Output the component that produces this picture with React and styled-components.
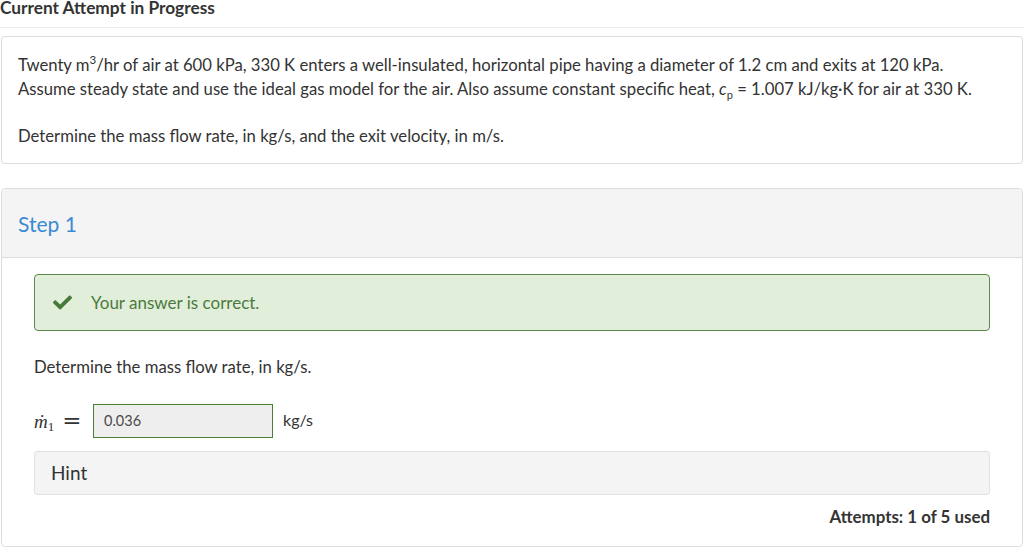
import styled, { createGlobalStyle } from "styled-components";
import { FaCheck } from "react-icons/fa";

const GlobalStyle = createGlobalStyle`
  body {
    margin: 0;
    background: #fff;
    font-family: Lato, "Open Sans", sans-serif;
    color: #333;
  }
`;

const Page = styled.div`
  width: 1024px;
  padding: 0 1px;
  box-sizing: border-box;
`;

const TopBar = styled.div`
  height: 27px;
  border-bottom: 1px solid #eee;
  margin: 0 -1px;
`;

const Title = styled.h2`
  margin: 0;
  font-size: 17.3px;
  font-weight: 700;
  line-height: 16px;
  color: #333;
`;

const Card = styled.div`
  border: 1px solid #ddd;
  border-radius: 4px;
  background: #fff;
  margin-top: ${({ $top }) => $top}px;
  overflow: hidden;
`;

const Problem = styled.div`
  padding: 16px 16px 15px;
  font-size: 16.7px;
  line-height: 24px;
  p {
    margin: 0;
  }
  p + p {
    margin-top: 23px;
  }
  sup {
    font-size: 11.5px;
    line-height: 0;
  }
  sub {
    font-size: 11px;
    line-height: 0;
  }
`;

const StepHeader = styled.div`
  height: 68px;
  background: #f4f4f4;
  border-bottom: 1px solid #ddd;
  display: flex;
  align-items: center;
  padding-left: 16px;
  font-size: 21px;
  color: #3a8ad6;
`;

const StepBody = styled.div`
  padding: 16px 32px 17px;
  font-size: 16.7px;
  line-height: 24px;
`;

const Alert = styled.div`
  height: 55px;
  border: 1px solid #5b8b4a;
  border-radius: 4px;
  background: #e1eed9;
  display: flex;
  align-items: center;
  gap: 19px;
  padding-left: 18px;
  color: #4c7a3f;
  font-size: 17px;
  svg {
    color: #467a3a;
  }
`;

const Question = styled.p`
  margin: 24px 0 0;
`;

const AnswerRow = styled.div`
  margin-top: 25px;
  display: flex;
  align-items: center;
`;

const MathLabel = styled.span`
  font-family: "Liberation Serif", "DejaVu Serif", serif;
  font-size: 19px;
  width: 59px;
  white-space: nowrap;
  i {
    font-style: italic;
  }
  sub {
    font-size: 13px;
    vertical-align: -3px;
    line-height: 0;
  }
`;

const Equals = styled.span`
  margin-left: 8px;
  font-size: 23px;
  font-family: "DejaVu Serif", serif;
  font-weight: 300;
`;

const AnswerBox = styled.div`
  width: 168px;
  height: 32px;
  border: 1px solid #4a7e3a;
  background: #eee;
  display: flex;
  align-items: center;
  padding-left: 10px;
  font-size: 14.5px;
  color: #4a4a4a;
`;

const Unit = styled.span`
  margin-left: 10px;
  align-self: flex-start;
  margin-top: 4px;
  font-size: 16px;
`;

const Hint = styled.div`
  margin-top: 13px;
  height: 42px;
  border: 1px solid #e2e2e2;
  border-radius: 3px;
  background: #f4f4f4;
  display: flex;
  align-items: center;
  padding-left: 16px;
  font-size: 19px;
  color: #333;
`;

const Attempts = styled.div`
  margin-top: 10px;
  text-align: right;
  font-weight: 700;
  font-size: 16.9px;
`;

export default function App() {
  return (
    <Page>
      <GlobalStyle />
      <TopBar>
        <Title>Current Attempt in Progress</Title>
      </TopBar>

      <Card $top={8}>
        <Problem>
          <p>
            Twenty m<sup>3</sup>/hr of air at 600 kPa, 330 K enters a
            well-insulated, horizontal pipe having a diameter of 1.2 cm and
            exits at 120 kPa.
            <br />
            Assume steady state and use the ideal gas model for the air. Also
            assume constant specific heat, <i>c</i>
            <sub>p</sub> = 1.007 kJ/kg·K for air at 330 K.
          </p>
          <p>Determine the mass flow rate, in kg/s, and the exit velocity, in m/s.</p>
        </Problem>
      </Card>

      <Card $top={24}>
        <StepHeader>Step 1</StepHeader>
        <StepBody>
          <Alert>
            <FaCheck size={19} />
            <span>Your answer is correct.</span>
          </Alert>
          <Question>Determine the mass flow rate, in kg/s.</Question>
          <AnswerRow>
            <MathLabel>
              <i>ṁ</i>
              <sub>1</sub>
              <Equals>=</Equals>
            </MathLabel>
            <AnswerBox>0.036</AnswerBox>
            <Unit>kg/s</Unit>
          </AnswerRow>
          <Hint>Hint</Hint>
          <Attempts>Attempts: 1 of 5 used</Attempts>
        </StepBody>
      </Card>
    </Page>
  );
}
